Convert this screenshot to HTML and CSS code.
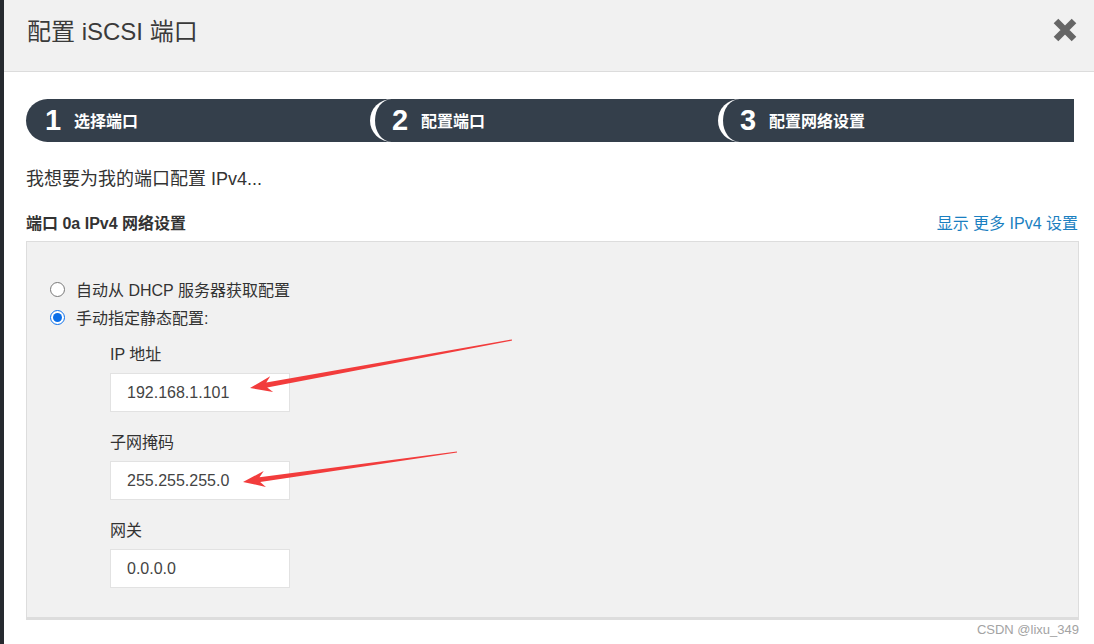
FILE: index.html
```html
<!DOCTYPE html>
<html lang="zh-CN">
<head>
    <meta charset="UTF-8">
    <meta name="viewport" content="width=device-width, initial-scale=1.0">
    <title>配置 iSCSI 端口</title>
    <link rel="stylesheet" href="styles.css">
</head>
<body>
    <div class="modal">
        <div class="modal-header">
            <h2>配置 iSCSI 端口</h2>
            <svg class="close" width="24" height="24" viewBox="0 0 24 24">
                <path d="M3 3 L21 21 M21 3 L3 21" stroke="#666" stroke-width="6.5" fill="none"/>
            </svg>
        </div>

        <div class="modal-body">
            <div class="wizard">
                <div class="step step-first"><span class="num">1</span><span class="label">选择端口</span></div>
                <div class="step step-second"><span class="num">2</span><span class="label">配置端口</span></div>
                <div class="step step-third"><span class="num">3</span><span class="label">配置网络设置</span></div>
            </div>

            <p class="intro">我想要为我的端口配置 IPv4...</p>

            <div class="section-head">
                <span class="section-title">端口 0a IPv4 网络设置</span>
                <a class="more-link" href="#">显示 更多 IPv4 设置</a>
            </div>

            <div class="panel">
                <label class="radio-row">
                    <input type="radio" name="mode">
                    <span>自动从 DHCP 服务器获取配置</span>
                </label>
                <label class="radio-row">
                    <input type="radio" name="mode" checked>
                    <span>手动指定静态配置:</span>
                </label>

                <div class="fields">
                    <div class="field">
                        <label for="ip">IP 地址</label>
                        <input type="text" id="ip" value="192.168.1.101">
                    </div>
                    <div class="field">
                        <label for="mask">子网掩码</label>
                        <input type="text" id="mask" value="255.255.255.0">
                    </div>
                    <div class="field">
                        <label for="gw">网关</label>
                        <input type="text" id="gw" value="0.0.0.0">
                    </div>
                </div>
            </div>
        </div>
    </div>

    <!-- red callout arrows drawn over the form -->
    <svg class="callouts" width="1094" height="644" viewBox="0 0 1094 644">
        <polygon fill="#f23c3c" points="250,388 270.2,376.2 266.3,382.5 511.9,339.4 512.1,340.6 267.2,387.4 273.1,391.9"/>
        <polygon fill="#f23c3c" points="243,482 263.7,471.0 259.5,477.2 456.9,451.4 457.1,452.6 260.2,482.1 265.9,486.9"/>
    </svg>

    <div class="watermark">CSDN @lixu_349</div>
</body>
</html>
```

FILE: styles.css
```css
* {
    box-sizing: border-box;
}
body {
    margin: 0;
    background-color: #262a2f;
    font-family: "Liberation Sans", Arial, "Noto Sans CJK SC", sans-serif;
    color: #333;
    width: 1094px;
    height: 644px;
    overflow: hidden;
    position: relative;
}
.modal {
    margin-left: 4px;
    height: 644px;
    background-color: #fff;
}
.modal-header {
    height: 72px;
    background-color: #f1f1f1;
    border-bottom: 1px solid #dcdcdc;
    display: flex;
    align-items: center;
    justify-content: space-between;
    padding: 0 17px 0 23px;
}
.modal-header h2 {
    margin: 0 0 8px;
    font-size: 24px;
    font-weight: normal;
    color: #3a3a3a;
    line-height: 30px;
}
.close {
    margin-bottom: 12px;
}
.modal-body {
    padding: 27px 15px 0 22px;
}

/* step bar */
.wizard {
    display: flex;
    height: 43px;
    margin-right: 5px;
}
.step {
    height: 43px;
    background-color: #343f4b;
    color: #fff;
    display: flex;
    align-items: center;
    border-radius: 22px 0 0 22px;
    padding-left: 19px;
    font-weight: bold;
}
.step-first {
    flex: 0 0 366px;
}
.step-second {
    flex: 0 0 370px;
}
.step-third {
    flex: 1;
}
.step-second, .step-third {
    margin-left: -22px;
    border-left: 5px solid #fff;
    padding-left: 17px;
}
.step .num {
    font-size: 29px;
    line-height: 43px;
    width: 29px;
}
.step .label {
    font-size: 16px;
    margin-bottom: 2px;
}

.intro {
    margin: 25px 0 0;
    font-size: 18px;
    line-height: 24px;
    color: #333;
}
.section-head {
    margin-top: 23px;
    display: flex;
    justify-content: space-between;
    align-items: center;
    line-height: 20px;
    font-size: 16px;
}
.section-title {
    font-weight: bold;
    color: #333;
}
.more-link {
    color: #1a7fc1;
    text-decoration: none;
    margin-right: 1px;
}

.panel {
    margin-top: 7px;
    background-color: #f1f1f1;
    border: 1px solid #dddddd;
    border-bottom-width: 3px;
    padding: 33px 0 29px 23px;
}
.radio-row {
    display: flex;
    align-items: center;
    height: 28px;
    font-size: 16px;
    color: #333;
}
.radio-row input {
    width: 15px;
    height: 15px;
    margin: 0 11px 0 0;
    accent-color: #0a6ee8;
}
.fields {
    margin-left: 60px;
    padding-top: 14px;
}
.field + .field {
    margin-top: 21px;
}
.field label {
    display: block;
    font-size: 16px;
    line-height: 20px;
    color: #333;
    margin-bottom: 8px;
}
.field input {
    width: 180px;
    height: 39px;
    border: 1px solid #e2e2e2;
    background-color: #fff;
    padding: 0 16px;
    font-family: inherit;
    font-size: 16px;
    color: #444;
    outline: none;
}

.callouts {
    position: absolute;
    top: 0;
    left: 0;
    pointer-events: none;
}
.watermark {
    position: absolute;
    right: 15px;
    bottom: 7px;
    font-size: 13px;
    color: #a3a3a3;
}
```
